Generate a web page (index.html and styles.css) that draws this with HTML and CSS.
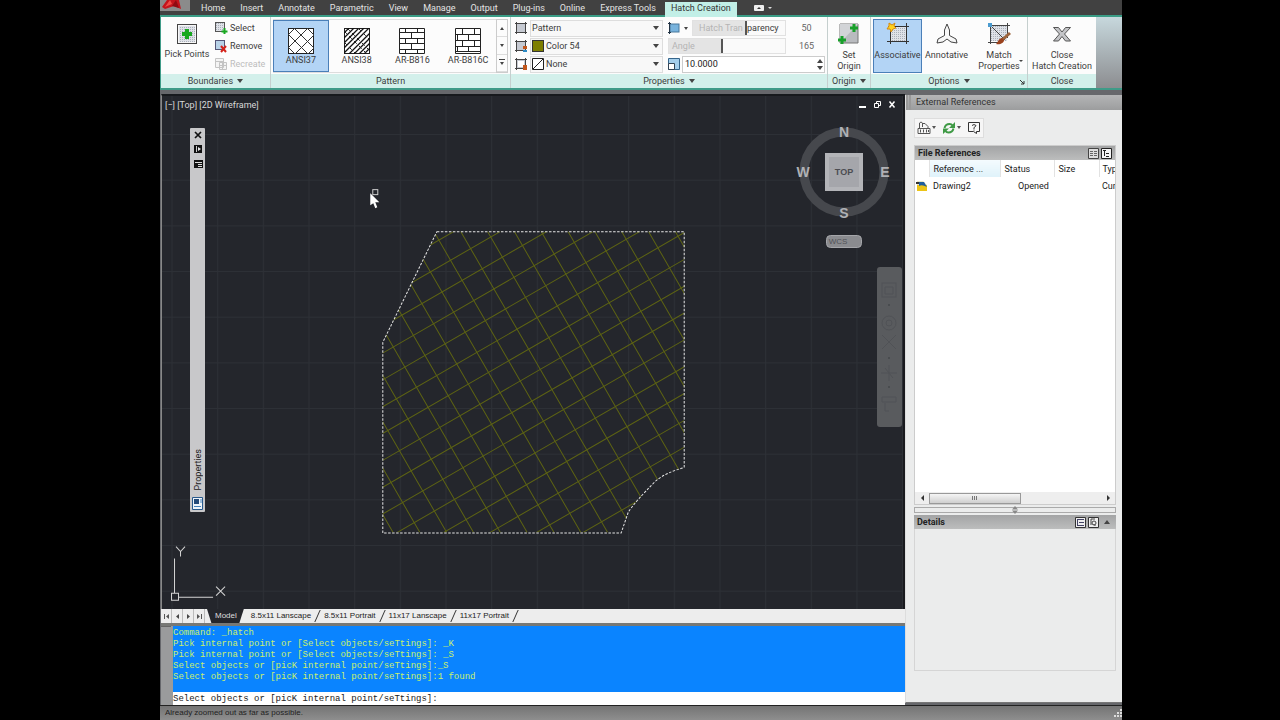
FILE: index.html
```html
<!DOCTYPE html>
<html lang="en">
<head>
<meta charset="utf-8">
<title>Hatch Creation</title>
<link rel="stylesheet" href="styles.css">
</head>
<body>
<svg class="defs" aria-hidden="true">
  <defs>
    <pattern id="dots" width="2" height="2" patternUnits="userSpaceOnUse"><rect width="2" height="2" fill="#dfe2e8"/><rect width="1" height="1" fill="#aab0ba"/></pattern>
    <symbol id="frame" viewBox="0 0 14 14"><rect x="3" y="3" width="8" height="8" fill="#c6cad2"/><path d="M2.500 1v12M11.500 1v12M1 2.500h12M1 11.500h12" stroke="#444" fill="none"/></symbol>
  </defs>
</svg>
<div class="app">
  <header class="menubar">
    <svg class="logo" viewBox="0 0 30 12"><path d="M0 0h30v11H0z" fill="#8b8b8b"/><path d="M2 7 7 0h12l2 9-7-3-9 3z" fill="#c3141c"/><path d="m5 7 5-7 2 4z" fill="#f14a45"/><path d="M12 6 16 0l3 8z" fill="#8e0b12"/></svg>
    <nav class="menus">
      <a href="#">Home</a><a href="#">Insert</a><a href="#">Annotate</a><a href="#">Parametric</a><a href="#">View</a><a href="#">Manage</a><a href="#">Output</a><a href="#">Plug-ins</a><a href="#">Online</a><a href="#">Express Tools</a><a href="#" class="current">Hatch Creation</a>
    </nav>
    <button class="minimize" aria-label="Minimize ribbon"><svg width="20" height="8" viewBox="0 0 20 8"><rect x="1" y="1" width="10" height="6" rx="1" fill="#eee"/><path d="m4 5 2-2 2 2z" fill="#333"/><path d="M15 3h4l-2 2z" fill="#ddd"/></svg></button>
  </header>

  <section class="ribbon">
    <div class="panel boundaries">
      <div class="body">
        <button class="big pick"><svg width="22" height="22" viewBox="0 0 22 22"><rect x="1.500" y="1.500" width="19" height="19" fill="#f7f7f7" stroke="#444"/><rect x="3" y="3" width="16" height="16" fill="url(#dots)"/><path d="M9 6h4v3h3v4h-3v3H9v-3H6V9h3z" fill="#18a820"/></svg><span>Pick Points</span></button>
        <div class="stack">
          <button><svg width="14" height="14" viewBox="0 0 14 14"><rect x="1.500" y="1.500" width="9" height="9" fill="url(#dots)" stroke="#555"/><path d="M10.500 7v6M7.500 10.500h6" stroke="#18a820" stroke-width="2"/></svg>Select</button>
          <button><svg width="14" height="14" viewBox="0 0 14 14"><rect x="1.500" y="1.500" width="9" height="9" fill="#b8d2e8" stroke="#557"/><path d="m7 7 5 6M12 7l-5 6" stroke="#d4231c" stroke-width="2"/></svg>Remove</button>
          <button disabled><svg width="14" height="14" viewBox="0 0 14 14"><path d="M1.500 1.500h8v9h-8zM2 4.500h7M5.500 5.500h7v7h-7zM5 8.500h7M8.500 6v6" fill="#f4f4f4" stroke="#c4c4c4"/></svg>Recreate</button>
        </div>
      </div>
      <button class="title">Boundaries <i class="down"></i></button>
    </div>
    <div class="panel pattern">
      <div class="body">
        <div class="gallery">
          <button class="swatch active"><svg width="26" height="26" viewBox="0 0 26 26"><rect x=".5" y=".5" width="25" height="25" fill="#fff" stroke="#222"/><path d="M0 7 7 0M0 20 20 0M7 26 26 7M20 26l6-6M0 6l20 20M6 0l20 20M19 0l7 7M0 19l7 7" stroke="#333" fill="none"/></svg><span>ANSI37</span></button>
          <button class="swatch"><svg width="26" height="26" viewBox="0 0 26 26"><rect x=".5" y=".5" width="25" height="25" fill="#fff" stroke="#222"/><path d="M0 5 5 0M0 10 10 0M0 15 15 0M0 20 20 0M0 25 25 0M5 26 26 5M10 26l16-16M15 26l11-11M20 26l6-6" stroke="#111" stroke-width="1.300"/><path d="m0 3 23 23M0 14l12 12M3 0l23 23M14 0l12 12" stroke="#222" stroke-dasharray="4 3"/></svg><span>ANSI38</span></button>
          <button class="swatch"><svg width="26" height="26" viewBox="0 0 26 26"><path d="M.5.5h25v25H.5zM.5 4.500h25M.5 10.500h25M.5 15.500h25M.5 21.500h25M6.500 0v4M18.500 0v4M12.500 4v6M6.500 10v5M18.500 10v5M12.500 15v6M6.500 21v5M18.500 21v5" fill="#fff" stroke="#222"/></svg><span>AR-B816</span></button>
          <button class="swatch"><svg width="26" height="26" viewBox="0 0 26 26"><path d="M.5.5h25v25H.5zM.5 6.500h25M.5 12.500h25M.5 18.500h25M.5 23.500h25M7.500 0v6M19.500 0v6M13.500 6v6M2.500 6v6M7.500 12v6M19.500 12v6M13.500 18v5M2.500 18v5" fill="#fff" stroke="#222"/></svg><span>AR-B816C</span></button>
        </div>
        <div class="scroller"><button aria-label="Up"><i class="up"></i></button><button aria-label="Down"><i class="down"></i></button><button aria-label="More"><svg width="6" height="7"><path d="M0 .5h6" stroke="#444"/><path d="M1 3h4L3 6z" fill="#444"/></svg></button></div>
      </div>
      <div class="title">Pattern</div>
    </div>
    <div class="panel properties">
      <div class="body">
        <div class="fields">
          <div class="field"><svg width="14" height="14"><use href="#frame"/></svg><button class="combo">Pattern<i class="down"></i></button></div>
          <div class="field"><svg width="14" height="14" viewBox="0 0 14 14"><use href="#frame"/><path d="M9 7h4v3H9z" fill="#c2571c"/><path d="M9 11h4v2H9z" fill="#2d8ac4"/></svg><button class="combo"><b class="chip"></b>Color 54<i class="down"></i></button></div>
          <div class="field"><svg width="14" height="14" viewBox="0 0 14 14"><use href="#frame"/><path d="M4 4h6v6H4z" fill="#fff"/><path d="M9 8h4v5H9z" fill="#c2571c"/></svg><button class="combo"><svg width="12" height="12" viewBox="0 0 12 12"><path d="M.5.5h11v11H.5zM1 11 11 1" fill="#fff" stroke="#222"/></svg>None<i class="down"></i></button></div>
        </div>
        <div class="fields">
          <div class="field"><svg width="12" height="12" viewBox="0 0 12 12"><rect x="2" y="2" width="9" height="8" fill="#78b3dd" stroke="#48789c"/><path d="M1.500 0v12M0 1.500h3M0 10.500h3" stroke="#234"/></svg><i class="down small"></i><div class="slider wide"><span class="fill">Hatch Tran</span><span>parency</span></div><output>50</output></div>
          <div class="field"><div class="slider"><span class="fill">Angle</span></div><output>165</output></div>
          <div class="field"><svg width="12" height="12" viewBox="0 0 12 12"><path d="M.5.5h11v11H.5z" fill="#a5cfec" stroke="#35658b"/><path d="M.5 5.500h6v6h-6z" fill="#fff" stroke="#345"/></svg><div class="number"><input aria-label="Scale" value="10.0000"><span class="spin"><i class="up"></i><i class="down"></i></span></div></div>
        </div>
      </div>
      <button class="title">Properties <i class="down"></i></button>
    </div>
    <div class="panel origin">
      <div class="body"><button class="big"><svg width="24" height="24" viewBox="0 0 24 24"><path d="M3 2h18v19H3z" fill="#b9bbbf" stroke="#777"/><path d="M3 21V2h18z" fill="#d2d4d7"/><path d="M17 2v8M13 6h8M5 14v8M1 18h8" stroke="#18a02a" stroke-width="3"/></svg><span>Set<br>Origin</span></button></div>
      <button class="title">Origin <i class="down"></i></button>
    </div>
    <div class="panel options">
      <div class="body">
        <button class="big active"><svg width="24" height="24" viewBox="0 0 24 24"><rect x="4" y="4" width="16" height="15" fill="url(#dots)"/><path d="M4.500 2v20M20.500 1v21M2 4.500h21M1 19.500h22" stroke="#333"/><path d="m3 1 3 2 3-2-1 3 2 2-3 1-2 3-1-3H1l2-3z" fill="#ffd21c" stroke="#d58a12"/></svg><span>Associative</span></button>
        <button class="big"><svg width="24" height="24" viewBox="0 0 24 24"><path d="M12 2 9.500 8v5.500L3 17l-1 4 6-1 4-3 4 3 6 1-1-4-6.500-3.500V8z" fill="#f7f7f7" stroke="#444"/></svg><span>Annotative</span></button>
        <button class="big match"><svg width="24" height="24" viewBox="0 0 24 24"><rect x="4" y="3" width="16" height="16" fill="url(#dots)"/><path d="M3.500 1v21M20.500 1v15M1 3.500h22M1 20.500h12M4 4l14 14" stroke="#444"/><rect x="1" y="1" width="4" height="4" fill="#4a9bd0"/><path d="m22 10-8 7 2 2 8-7z" fill="#9d643d"/><path d="M15 16c-3 0-4 4-6 6 4 1 8-1 8-4z" fill="#9a421e"/></svg><span>Match<br>Properties</span><i class="down tiny"></i></button>
      </div>
      <button class="title">Options <i class="down"></i><svg class="launcher" width="6" height="6" viewBox="0 0 6 6"><path d="m1 1 4 4M5 2v3H2" stroke="#333" fill="none"/></svg></button>
    </div>
    <div class="panel close">
      <div class="body"><button class="big"><svg width="24" height="24" viewBox="0 0 24 24"><path d="M3.500 5.500h5L12 10l3.500-4.500h5L14.500 12l6 7h-5L12 14.500 8.500 19h-5l6-7z" fill="#c4c5c8" stroke="#555"/></svg><span>Close<br>Hatch Creation</span></button></div>
      <div class="title">Close</div>
    </div>
  </section>

  <div class="workspace">
    <main class="left">
      <div class="canvas">
        <svg class="drawing" viewBox="162 96 740 513" preserveAspectRatio="xMinYMin slice">
          <defs>
            <pattern id="grid" width="45.600" height="45.600" x="171.500" y="134" patternUnits="userSpaceOnUse"><path d="M.5 0v45.600M0 .5h45.600" stroke="#2d3036"/></pattern>
            <clipPath id="shape"><path d="M436.500 231.500h247V467q-18 5-28 13-22 22-28 32l-7 20H382.500V342z"/></clipPath>
          </defs>
          <rect x="162" y="95" width="1600" height="1200" fill="url(#grid)"/>
          <g clip-path="url(#shape)">
            <g transform="translate(548.300 337.300) rotate(-30)" stroke="#5d6313" fill="none">
              <path d="M-280-255.200H280M-280-232H280M-280-208.800H280M-280-185.600H280M-280-162.400H280M-280-139.200H280M-280-116H280M-280-92.800H280M-280-69.600H280M-280-46.400H280M-280-23.200H280M-280 0H280M-280 23.200H280M-280 46.400H280M-280 69.600H280M-280 92.800H280M-280 116H280M-280 139.200H280M-280 162.400H280M-280 185.600H280M-280 208.800H280M-280 232H280M-280 255.200H280"/>
              <path d="M-255.200-280V280M-232-280V280M-208.800-280V280M-185.600-280V280M-162.400-280V280M-139.200-280V280M-116-280V280M-92.800-280V280M-69.600-280V280M-46.400-280V280M-23.200-280V280M0-280V280M23.200-280V280M46.400-280V280M69.600-280V280M92.800-280V280M116-280V280M139.200-280V280M162.400-280V280M185.600-280V280M208.800-280V280M232-280V280"/>
            </g>
          </g>
          <path d="M436.500 231.500h247V467q-18 5-28 13-22 22-28 32l-7 20.500H382.500V342z" fill="none" stroke="#e6e6e6" stroke-dasharray="2.500 1.500"/>
          <path d="M174.500 558v34M178 596.500h35M171.500 592.500h7v7h-7zM216 586l9 9M225 586l-9 9M176 546l4.500 5 4.500-5M180.500 551v5" fill="none" stroke="#d4d4d4"/>
          <rect x="372.500" y="189.500" width="5" height="5" fill="none" stroke="#ccc"/>
          <path d="M370 193v12l3-2 2 5 2-1-2-5h4z" fill="#fff"/>
        </svg>
        <div class="viewlabel">[−] [Top] [2D Wireframe]</div>
        <div class="winbuttons">
          <button aria-label="Minimize"><svg width="9" height="9"><path d="M1 7h7" stroke="#fff" stroke-width="2"/></svg></button>
          <button aria-label="Restore"><svg width="9" height="9"><path d="M1.500 3.500h4v4h-4zM3.500 3V1.500h4v4H6" fill="none" stroke="#fff"/></svg></button>
          <button aria-label="Close"><svg width="9" height="9"><path d="m1.500 1.500 5 6M6.500 1.500l-5 6" stroke="#fff" stroke-width="1.500"/></svg></button>
        </div>
        <svg class="cube" width="96" height="128" viewBox="0 0 96 128">
          <circle cx="48" cy="49" r="40" fill="none" stroke="#46484d" stroke-width="9"/>
          <rect x="29" y="30" width="38" height="38" fill="#b3b4b8"/><rect x="33" y="34" width="30" height="30" fill="#a5a6ab"/>
          <g class="compass"><text x="48" y="14">N</text><text x="48" y="95">S</text><text x="7" y="54">W</text><text x="89" y="54">E</text></g>
          <text class="top" x="48" y="52">TOP</text>
          <rect x="30.500" y="112.500" width="35" height="12" rx="4" fill="#8a8b8f" stroke="#a5a6aa"/><text class="wcs" x="42" y="121">WCS</text>
        </svg>
        <svg class="navbar" width="25" height="160" viewBox="0 0 25 160"><rect width="25" height="160" rx="3" fill="#595b5e"/><g fill="none" stroke="#505256"><rect x="5" y="16" width="14" height="14"/><path d="M8 20h8v7H8z"/><circle cx="12" cy="56" r="7"/><circle cx="12" cy="56" r="3"/><path d="m5 68 14 14M19 68 5 82M12 98v16M4 106h16M8 101l8 10M5 130h14v5H5zM8 136v8h4"/></g><g fill="#45474b"><circle cx="12" cy="38" r="1"/><circle cx="12" cy="91" r="1"/><circle cx="12" cy="120" r="1"/></g></svg>
        <aside class="propbar">
          <svg width="11" height="42" viewBox="0 0 11 42"><path d="m3 3 6 6M9 3l-6 6" stroke="#111" stroke-width="1.700"/><path d="M2 16h8v8H2z" fill="#111"/><path d="M4.500 17v6" stroke="#ccc"/><path d="m6 18 3 2-3 2z" fill="#eee"/><path d="M2 31h9v8H2z" fill="#111"/><path d="M3 33.500h7M6 35.500h4M6 37.500h4" stroke="#ddd"/></svg>
          <span>Properties</span>
          <svg width="11" height="13" viewBox="0 0 11 13"><path d="M.5.5h10v12H.5z" fill="#eef4fa" stroke="#27598c"/><path d="M2 2h5v5H2z" fill="#234a78"/><path d="M8 3h2M8 5h2M2 9.500h7" stroke="#4682ba"/></svg>
        </aside>
      </div>
      <div class="tabs">
        <button class="arrow" aria-label="First"><svg width="7" height="7"><path d="M1.500 1v5" stroke="#555"/><path d="M6 1v5L3 3.500z" fill="#555"/></svg></button><button class="arrow" aria-label="Previous"><svg width="7" height="7"><path d="M5 1v5L2 3.500z" fill="#444"/></svg></button><button class="arrow" aria-label="Next"><svg width="7" height="7"><path d="M2 1v5l3-2.500z" fill="#444"/></svg></button><button class="arrow" aria-label="Last"><svg width="7" height="7"><path d="M1 1v5l3-2.500z" fill="#555"/><path d="M5.500 1v5" stroke="#555"/></svg></button>
        <button class="tab model">Model</button><button class="tab">8.5x11 Lanscape</button><button class="tab">8.5x11 Portrait</button><button class="tab">11x17 Lanscape</button><button class="tab">11x17 Portrait</button>
      </div>
      <div class="command">
        <div class="grip"></div>
        <div class="console">
          <div class="history">Command: _hatch
Pick internal point or [Select objects/seTtings]: _K
Pick internal point or [Select objects/seTtings]: _S
Select objects or [picK internal point/seTtings]:_S
Select objects or [picK internal point/seTtings]:1 found</div>
          <input class="prompt" aria-label="Command line" value="Select objects or [picK internal point/seTtings]:">
        </div>
      </div>
    </main>
    <aside class="palette">
      <h2>External References</h2>
      <div class="content">
        <div class="tools">
          <button aria-label="Attach DWG"><svg width="20" height="14" viewBox="0 0 20 14"><path d="M2.500 7V2q1.500-2 3 0v4M5 2.500h3l3 3V8M1 7.500h12v5H1zM3.500 8.500v3M6.500 8.500v3M9.500 8.500v3M11.500 9v2" fill="none" stroke="#555"/><path d="M15 5h4l-2 3z" fill="#555"/></svg></button>
          <button aria-label="Refresh"><svg width="20" height="14" viewBox="0 0 20 14"><path d="M2.500 7q1-4 5-4 2 0 3 1.500M11.500 7.500q-1 4-5 4-2 0-3-1.500" fill="none" stroke="#3f9a45" stroke-width="2"/><path d="M13 1v6H7zM1 13V7.500h6z" fill="#3f9a45"/><path d="M15 5h4l-2 3z" fill="#555"/></svg></button>
          <button aria-label="Help"><svg width="14" height="14" viewBox="0 0 14 14"><path d="M1.500 1.500h11v9h-3v2l-3-2h-5z" fill="#f8f8f8" stroke="#333"/><path d="M5 4.500q2-2 4 0 0 1-2 2V8M7 8.500v1" stroke="#333" fill="none"/></svg></button>
        </div>
        <section class="refs">
          <h3>File References<span class="icons"><svg width="11" height="11" viewBox="0 0 11 11"><path d="M.5.5h10v10H.5z" fill="#ddd" stroke="#444"/><path d="M2 3.500h7M2 5.500h7M2 7.500h7" stroke="#666" stroke-dasharray="3 1"/></svg><svg width="11" height="11" viewBox="0 0 11 11"><path d="M.5.5h10v10H.5z" fill="#f5f5f5" stroke="#222"/><path d="M2 2.500h3M3.500 3v5M5 5.500h3M5 8.500h3" stroke="#222"/></svg></span></h3>
          <table>
            <tr><th></th><th class="sorted">Reference ...</th><th>Status</th><th>Size</th><th>Typ</th></tr>
            <tr><td><svg width="12" height="12" viewBox="0 0 12 12"><path d="M1 1h6l4 4v6H1z" fill="#e8e6c8"/><path d="M1 5h10v6H1z" fill="#ecc417"/><path d="M3 2h5l3 5q-5-3-8-1z" fill="#1f5d9e"/><path d="M0 2h3v2H0z" fill="#333"/></svg></td><td>Drawing2</td><td class="state">Opened</td><td></td><td>Cur</td></tr>
          </table>
          <div class="hscroll"><button aria-label="Scroll left"><i class="leftarr"></i></button><span class="thumb"></span><button class="end" aria-label="Scroll right"><i class="rightarr"></i></button></div>
        </section>
        <div class="splitter"><svg width="8" height="8"><path d="M1 3.500 4 0l3 3.500zM1 4.500 4 8l3-3.500z" fill="#888"/></svg></div>
        <section class="details">
          <h3>Details<span class="icons"><svg width="11" height="11" viewBox="0 0 11 11"><path d="M.5.5h10v10H.5z" fill="#eee" stroke="#333"/><path d="M2 2.500h7M4 5.500h5M2 8.500h7M2.500 3v5" stroke="#446"/></svg><svg width="11" height="11" viewBox="0 0 11 11"><path d="M.5.5h10v10H.5z" fill="#eee" stroke="#333"/><path d="M3 8V2h4M7.500 9l-2-2" stroke="#444" fill="none"/><circle cx="6" cy="6" r="2" fill="none" stroke="#444"/></svg><i class="up"></i></span></h3>
          <div class="blank"></div>
        </section>
      </div>
    </aside>
  </div>
  <footer class="status">Already zoomed out as far as possible.<svg width="8" height="8"><path d="M6 0h2v2H6zM3 3h2v2H3zM6 3h2v2H6zM0 6h2v2H0zM3 6h2v2H3zM6 6h2v2H6z" fill="#ddd"/></svg></footer>
</div>
</body>
</html>
```
FILE: styles.css
```css
* { box-sizing: border-box; }
body { margin: 0; background: #000; font: 9px/12px Roboto, "Noto Sans", sans-serif; color: #3c3c3c; }
button { margin: 0; padding: 0; border: 0; background: none; font: inherit; color: inherit; white-space: nowrap; }
input { font: inherit; color: inherit; margin: 0; min-width: 0; }
a { color: inherit; text-decoration: none; }
svg { flex: none; display: block; }
.defs { position: absolute; width: 0; height: 0; }
.app { display: flex; flex-direction: column; min-height: 100vh; margin: 0 158px 0 160px; background: #66676b; }

.down, .up, .leftarr, .rightarr { display: inline-block; flex: none; border: 3px solid transparent; }
.down { border-top: 4px solid #444; border-bottom: 0; }
.up { border-bottom: 4px solid #444; border-top: 0; }
.leftarr { border-right-color: #333; border-left: 0; }
.rightarr { border-left-color: #333; border-right: 0; }

.menubar { display: flex; height: 17px; background: #414141; border-bottom: 2px solid #3a9c85; color: #e4e4e4; }
.logo { width: 30px; height: 12px; }
.menus { display: flex; gap: 15px; margin-left: 11px; }
.menus a { line-height: 16px; white-space: nowrap; }
.menus .current { padding: 0 6px; margin-left: -6px; height: 15px; margin-top: 2px; line-height: 12px; background: #c2efe7; color: #343434; }
.minimize { margin-left: 16px; }

.ribbon { display: flex; height: 73px; background: linear-gradient(#c7d8dd, #8c8d90); border-bottom: 2px solid #3f9b88; border-left: 1px solid #3f9b88; }
.panel { display: flex; flex-direction: column; background: #fcfcfc; border-right: 1px solid #c5cfce; }
.body { display: flex; flex: 1; padding-top: 2px; }
.title { display: block; position: relative; height: 14px; line-height: 15px; text-align: center; background: #d3f0eb; }
.title .down { margin-left: 2px; vertical-align: 1px; }
.boundaries { width: 110px; }
.pattern { width: 240px; }
.properties { width: 317px; }
.origin { width: 43px; }
.options { width: 157px; }
.close { width: 68px; border-right: 0; }
.big { position: relative; display: flex; flex-direction: column; align-items: center; gap: 4px; padding-top: 2px; flex: 1; height: 54px; line-height: 11px; border: 1px solid transparent; }
.big.active, .swatch.active { background: #b3d4f5; border: 1px solid #4a7fb8; }
.options .big { flex: 0 0 49px; }
.options .body { padding-left: 2px; }
.options .match { flex: 1; }
.tiny { position: absolute; right: 3px; top: 40px; border-width: 2px; border-top-width: 2px; }
.launcher { position: absolute; right: 2px; top: 5px; }
.pick { flex: 0 0 52px; padding-top: 3px; }
.stack { display: flex; flex-direction: column; padding-left: 1px; }
.stack button { display: flex; align-items: center; gap: 2px; height: 18px; }
.stack button:disabled { color: #bcbcbc; }
.gallery { display: flex; flex: 1; margin-left: 2px; border-top: 1px solid #ddd; border-bottom: 1px solid #ddd; height: 54px; }
.swatch { display: flex; flex-direction: column; align-items: center; flex: 1; padding-top: 7px; border: 1px solid transparent; }
.scroller { display: flex; flex-direction: column; width: 12px; height: 54px; margin-right: 2px; border: 1px solid #ccc; }
.scroller button { flex: 1; display: flex; align-items: center; justify-content: center; border-bottom: 1px solid #ddd; }
.scroller i { border-left-width: 2px; border-right-width: 2px; border-top-width: 3px; }
.scroller .up { border-top-width: 0; border-bottom-width: 3px; }

.fields { display: flex; flex-direction: column; flex: 0 0 152px; padding-left: 3px; }
.fields + .fields { flex: 1; padding: 0 2px 0 5px; }
.field { display: flex; align-items: center; gap: 2px; height: 18px; }
.combo { display: flex; align-items: center; gap: 2px; flex: 1; height: 17px; padding: 0 3px 0 1px; border: 1px solid #ddd; background: #f8f8f8; }
.combo .down { margin-left: auto; }
.chip { width: 12px; height: 12px; background: #7d7e00; border: 1px solid #333; }
.small { border-width: 2px; border-top-width: 3px; margin: 0 2px; }
.slider { display: flex; align-items: center; flex: 1; height: 16px; border: 1px solid #e1e1e1; background: #fafafa; white-space: nowrap; }
.fill { flex: none; height: 14px; line-height: 14px; width: 54px; padding-left: 3px; background: #e4e4e4; color: #b4b4b4; border-right: 2px solid #555; }
.wide .fill { padding-left: 6px; }
output { width: 37px; text-align: center; color: #666; }
.number { display: flex; align-items: center; flex: 1; height: 17px; padding-right: 1px; border: 1px solid #ccc; background: #fff; }
.number input { flex: 1; width: 0; height: 15px; padding: 0 2px; border: 0; background: none; color: #222; }
.spin { display: flex; flex-direction: column; gap: 3px; }

.workspace { display: flex; flex: 1; padding-top: 4px; padding-left: 1px; }
.left { display: flex; flex-direction: column; flex: 1; min-width: 0; }
.canvas { position: relative; flex: 1; background: #24262c; border-left: 1px solid #888; border-top: 2px solid #17191d; border-right: 2px solid #191a1e; overflow: hidden; }
.drawing { position: absolute; inset: 0; width: 100%; height: 100%; }
.viewlabel { position: absolute; left: 3px; top: 3px; color: #d9d9d9; }
.winbuttons { position: absolute; right: 6px; top: 4px; display: flex; gap: 6px; }
.cube { position: absolute; right: 11px; top: 27px; }
.cube text { text-anchor: middle; font-family: "Liberation Sans", Arial, sans-serif; }
.compass { font-size: 14px; font-weight: 700; fill: #b0b1b5; }
.cube .top { font-size: 9px; font-weight: 700; fill: #4c4d51; }
.cube .wcs { font-size: 8px; fill: #515257; }
.navbar { position: absolute; right: 1px; top: 171px; }
.propbar { position: absolute; left: 28px; top: 32px; bottom: 97px; width: 15px; display: flex; flex-direction: column; align-items: center; background: #c8c8ca; border-radius: 1px; padding: 1px 0 2px; }
.propbar span { writing-mode: vertical-rl; transform: rotate(180deg); margin-top: auto; margin-bottom: 7px; color: #222; }

.tabs { display: flex; height: 14px; background: #ededed; font: 8px/14px "Liberation Sans", Arial, sans-serif; color: #222; }
.arrow { width: 11px; display: flex; align-items: center; justify-content: center; border-right: 1px solid #bbb; }
.tab { position: relative; padding: 0 6px 0 7px; }
.tab::after { content: ""; position: absolute; right: -1px; top: 1px; height: 12px; border-right: 1px solid #333; transform: skewX(-24deg); }
.model { margin-left: 2px; padding: 0 7px 0 8px; background: #24262c; color: #ddd; clip-path: polygon(0 0, 100% 0, 88% 100%, 12% 100%); }

.command { display: flex; height: 82px; border-top: 3px solid #777875; background: #909192; }
.grip { width: 12px; background: linear-gradient(#666 1px, transparent 1px) 0 0 / 10px 2px no-repeat, #9a9b9c; }
.console { display: flex; flex-direction: column; flex: 1; font: 9px/11px "Liberation Mono", "Courier New", monospace; }
.history { flex: 1; padding-top: 2px; white-space: pre; background: #0a84ff; color: #c9f06c; }
.prompt { height: 13px; padding: 0; border: 0; background: #fff; color: #222; }

.palette { display: flex; flex-direction: column; width: 217px; margin: 1px 0 2px; background: #ebecec; border-left: 1px solid #ddd; border-bottom: 1px solid #777; color: #222; }
.palette h2 { margin: 0; padding-left: 5px; font-size: 9px; font-weight: 400; line-height: 15px; background: linear-gradient(#b4b5b6, #9c9d9e); color: #333; border-left: 5px double #999; }
.content { display: flex; flex-direction: column; flex: 1; padding: 8px 6px 31px 8px; }
.tools { display: flex; align-items: center; gap: 5px; height: 20px; padding: 0 2px; align-self: flex-start; background: #f6f6f6; border: 1px solid #ddd; }
.refs { margin-top: 7px; display: flex; flex-direction: column; flex: 1; background: #fff; border: 1px solid #ccc; overflow: hidden; }
.palette h3 { display: flex; align-items: center; margin: 0; padding: 0 3px; height: 14px; font-size: 9px; line-height: 14px; background: linear-gradient(#a3a4a5, #bcbdbd); }
.icons { display: flex; align-items: center; gap: 2px; margin-left: auto; }
table { width: 100%; table-layout: fixed; border-collapse: collapse; }
th, td { padding: 0 4px; height: 17px; font-weight: 400; text-align: left; white-space: nowrap; }
th { border-right: 1px solid #e2e2e2; }
td:first-child { padding: 0 1px; }
th:nth-child(1) { width: 14px; }
th:nth-child(2) { width: 71px; }
th:nth-child(3) { width: 54px; }
th:nth-child(4) { width: 45px; }
th:last-child, td:last-child { padding: 0 0 0 3px; border-right: 0; }
.sorted { background: linear-gradient(#f4fbfe, #dff2fa); }
.state { padding-left: 18px; padding-right: 0; }
.hscroll { display: flex; align-items: center; margin-top: auto; height: 12px; background: #eee; }
.hscroll button { width: 14px; display: flex; justify-content: center; }
.hscroll .end { margin-left: auto; }
.thumb { width: 46%; height: 11px; border: 1px solid #999; background: repeating-linear-gradient(90deg, #777 0 1px, transparent 1px 2px) center / 6px 4px no-repeat, linear-gradient(#f5f5f5, #cfcfcf); }
.splitter { display: flex; align-items: center; justify-content: center; height: 6px; margin: 2px 0; border: 1px solid #aaa; }
.details { display: flex; flex-direction: column; }
.details .icons .up { margin: 0 3px; }
.blank { height: 142px; border: 1px solid #d5d5d5; border-top: 0; }

.status { display: flex; align-items: center; justify-content: space-between; height: 15px; padding-left: 5px; border-top: 1px solid #222; background: linear-gradient(#747474, #8e8e8e); color: #222; font: 8px/14px "Liberation Sans", Arial, sans-serif; }
```
